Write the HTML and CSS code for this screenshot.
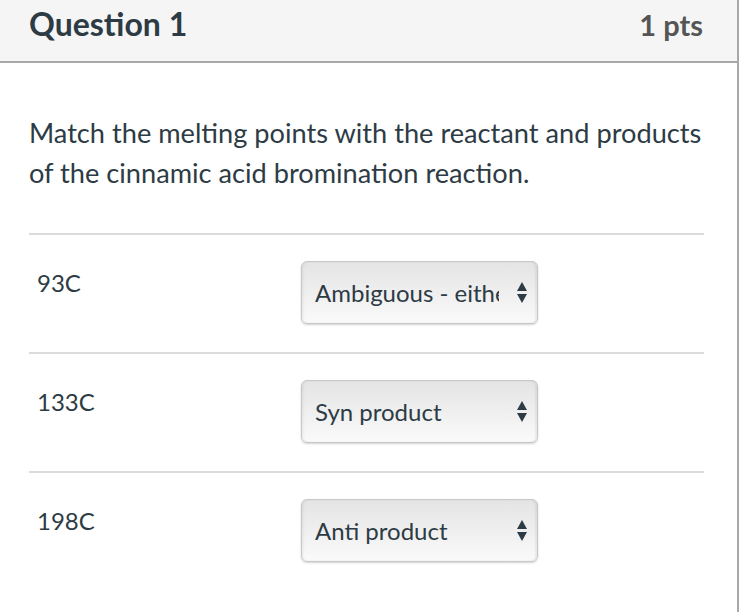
FILE: index.html
```
<!DOCTYPE html>
<html>
<head>
<meta charset="utf-8">
<link rel="stylesheet" href="styles.css">
</head>
<body>
<div class="question">
  <div class="header">
    <h2 class="title">Question 1</h2>
    <span class="pts">1 pts</span>
  </div>
  <div class="content">
    <p class="prompt">Match the melting points with the reactant and products of the cinnamic acid bromination reaction.</p>
    <div class="row">
      <div class="label">93C</div>
      <div class="select"><span class="value">Ambiguous - either</span><span class="arrows"><span class="up"></span><span class="down"></span></span></div>
    </div>
    <div class="row">
      <div class="label">133C</div>
      <div class="select"><span class="value">Syn product</span><span class="arrows"><span class="up"></span><span class="down"></span></span></div>
    </div>
    <div class="row">
      <div class="label">198C</div>
      <div class="select"><span class="value">Anti product</span><span class="arrows"><span class="up"></span><span class="down"></span></span></div>
    </div>
  </div>
</div>
</body>
</html>
```
FILE: styles.css
```
html, body {
  margin: 0;
  padding: 0;
  background: #ffffff;
}
body {
  font-family: Lato, "Open Sans", sans-serif;
  color: #2d3b45;
}
.question {
  width: 737px;
  height: 612px;
  border-right: 2px solid #a8a8a8;
}
.header {
  box-sizing: border-box;
  background: #f5f5f5;
  border-bottom: 2px solid #a8a8a8;
  display: flex;
  align-items: baseline;
  justify-content: space-between;
  padding: 5px 34px 0 29px;
  height: 63px;
}
.title {
  margin: 0;
  font-size: 32px;
  line-height: 38px;
  font-weight: 700;
  color: #2d3b45;
}
.pts {
  font-size: 29px;
  line-height: 38px;
  font-weight: 700;
  color: #555555;
}
.content {
  padding: 50px 33px 0 29px;
}
.prompt {
  margin: 0 -4px 40px 0;
  font-size: 27.2px;
  line-height: 40px;
}
.row {
  border-top: 2px solid #dcdcdc;
  display: flex;
  align-items: flex-start;
  height: 117px;
}
.label {
  width: 264px;
  padding-left: 8px;
  padding-top: 34px;
  font-size: 24px;
  line-height: 28px;
}
.select {
  margin-top: 26px;
  border: 1px solid #c8c8c8;
  border-radius: 6px;
  background: linear-gradient(#e4e4e4, #fafafa);
  box-shadow: inset 2px 0 2px rgba(0,0,0,0.04), inset -2px 0 2px rgba(0,0,0,0.06), 0 1px 2px rgba(0,0,0,0.18);
  display: flex;
  align-items: center;
  padding: 0 10px 0 13px;
  box-sizing: border-box;
  width: 237px;
  height: 63px;
}
.value {
  width: 184px;
  overflow: hidden;
  white-space: nowrap;
  font-size: 24px;
  flex: none;
}
.arrows {
  margin-left: auto;
  display: flex;
  flex-direction: column;
  gap: 3px;
}
.up {
  width: 0;
  height: 0;
  border-left: 5px solid transparent;
  border-right: 5px solid transparent;
  border-bottom: 9px solid #2d3b45;
}
.down {
  width: 0;
  height: 0;
  border-left: 5px solid transparent;
  border-right: 5px solid transparent;
  border-top: 9px solid #2d3b45;
}
```
